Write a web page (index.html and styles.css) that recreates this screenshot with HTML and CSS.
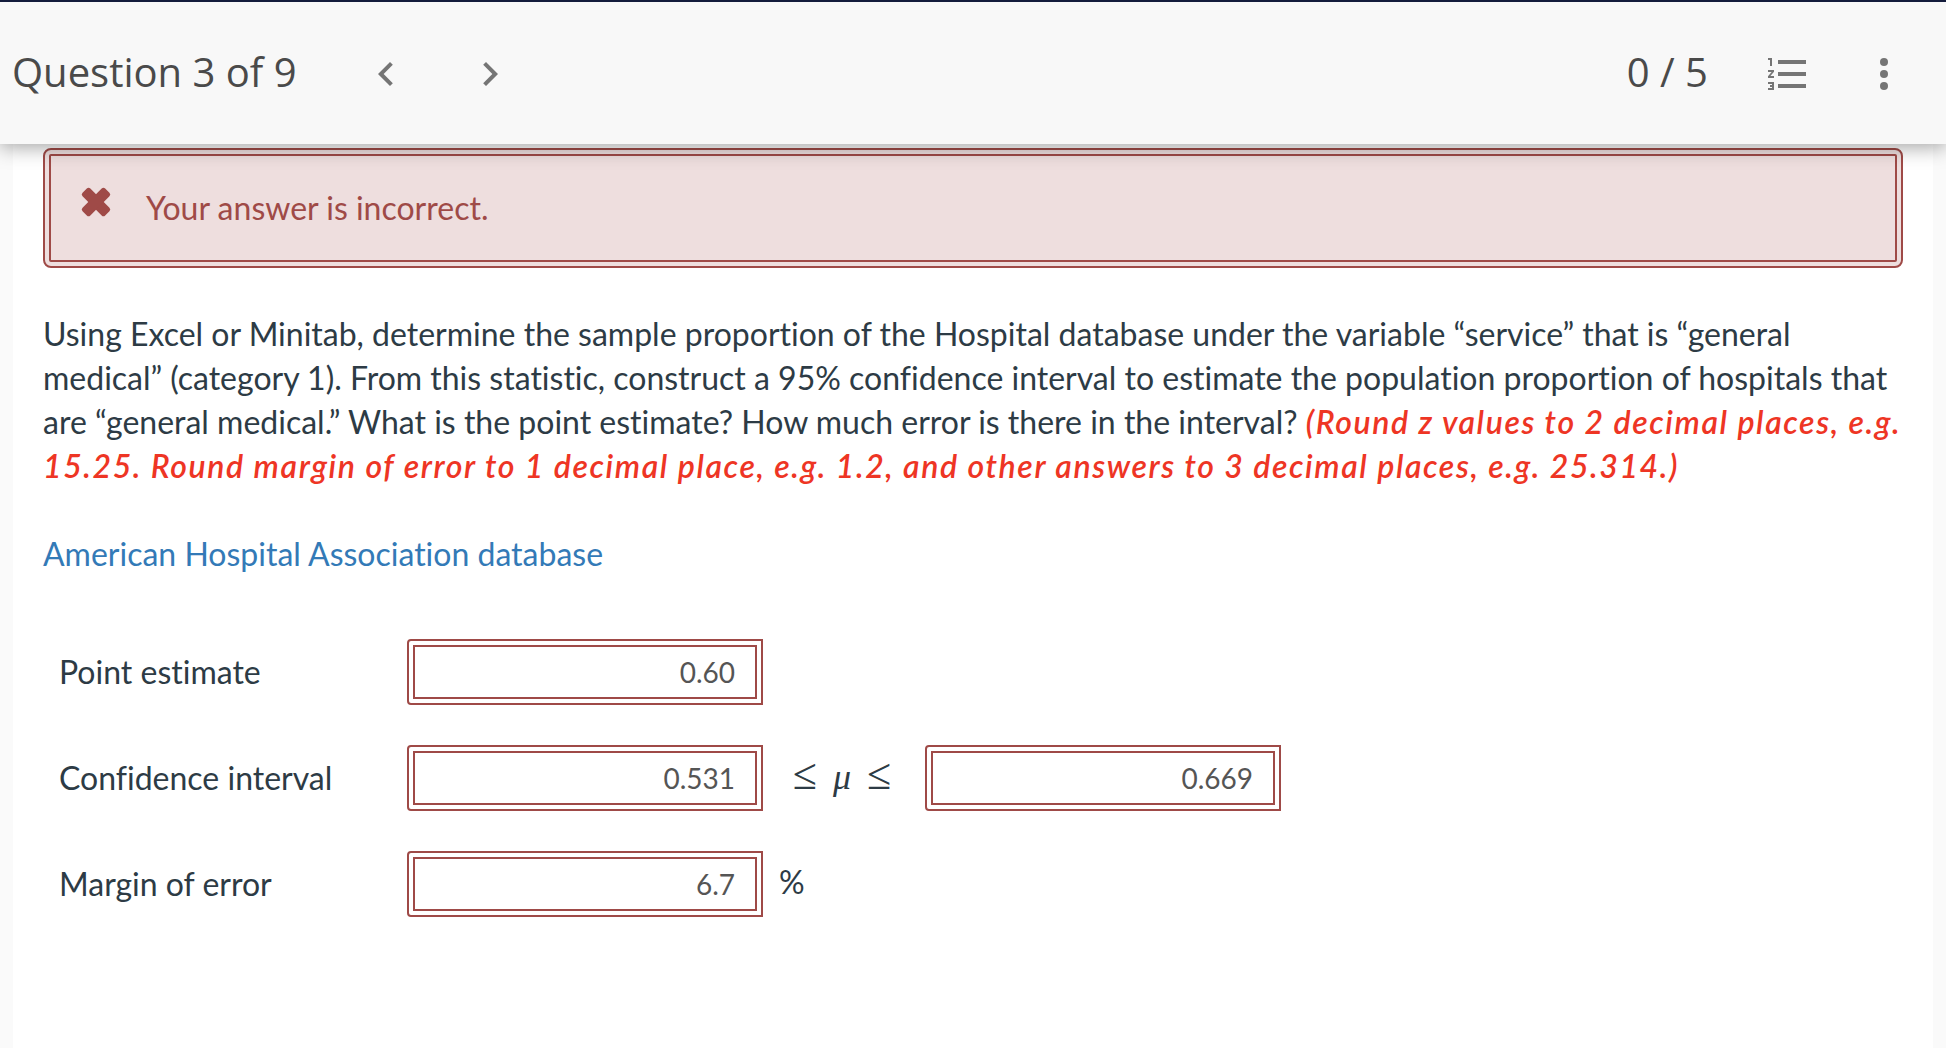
FILE: index.html
```html
<!DOCTYPE html>
<html lang="en">
<head>
<meta charset="utf-8">
<title>Question 3 of 9</title>
<link rel="stylesheet" href="styles.css">
</head>
<body>
<header class="toolbar">
  <h1 class="toolbar-title">Question 3 of 9</h1>
  <nav class="pager" aria-label="Questions">
    <button class="icon-button" type="button" aria-label="Previous question">
      <svg viewBox="0 0 24 24"><path d="M15.41 7.41 14 6l-6 6 6 6 1.41-1.41L10.83 12z"/></svg>
    </button>
    <button class="icon-button" type="button" aria-label="Next question">
      <svg viewBox="0 0 24 24"><path d="M10 6 8.59 7.41 13.17 12l-4.58 4.59L10 18l6-6z"/></svg>
    </button>
  </nav>
  <div class="score">0 / 5</div>
  <div class="tools">
    <button class="icon-button" type="button" aria-label="Question list">
      <svg viewBox="0 0 24 24"><path d="M2 17h2v.5H3v1h1v.5H2v1h3v-4H2v1zm1-9h1V4H2v1h1v3zm-1 3h1.800L2 13.100v.9h3v-1H3.200L5 10.900V10H2v1zm5-6v2h14V5H7zm0 14h14v-2H7v2zm0-6h14v-2H7v2z"/></svg>
    </button>
    <button class="icon-button" type="button" aria-label="More options">
      <svg viewBox="0 0 24 24"><circle cx="12" cy="6" r="2"/><circle cx="12" cy="12" r="2"/><circle cx="12" cy="18" r="2"/></svg>
    </button>
  </div>
</header>
<main class="page">
  <div class="alert" role="alert">
    <svg class="alert-icon" viewBox="0 0 32 32" aria-hidden="true">
      <g transform="rotate(45 16 16)"><rect x="0" y="10.500" width="32" height="11" rx="2.500"/><rect x="10.500" y="0" width="11" height="32" rx="2.500"/></g>
    </svg>
    <span>Your answer is incorrect.</span>
  </div>
  <p class="question">Using Excel or Minitab, determine the sample proportion of the Hospital database under the variable “service” that is “general medical” (category 1). From this statistic, construct a 95% confidence interval to estimate the population proportion of hospitals that are “general medical.” What is the point estimate? How much error is there in the interval? <strong class="rounding">(Round z values to 2 decimal places, e.g. 15.25. Round margin of error to 1 decimal place, e.g. 1.2, and other answers to 3 decimal places, e.g. 25.314.)</strong></p>
  <p class="source"><a href="#">American Hospital Association database</a></p>
  <form class="answers">
    <div class="row">
      <label class="label" for="point">Point estimate</label>
      <input class="answer" id="point" type="text" value="0.60">
    </div>
    <div class="row">
      <label class="label" for="low">Confidence interval</label>
      <input class="answer" id="low" type="text" value="0.531">
      <span class="math"><span>≤</span><i class="symbol">μ</i><span>≤</span></span>
      <input class="answer" type="text" value="0.669" aria-label="Upper limit">
    </div>
    <div class="row">
      <label class="label" for="margin">Margin of error</label>
      <input class="answer" id="margin" type="text" value="6.7">
      <span class="unit">%</span>
    </div>
  </form>
</main>
</body>
</html>
```
FILE: styles.css
```css
* {
  box-sizing: border-box;
}

body {
  margin: 0;
  min-height: 100vh;
  display: flex;
  flex-direction: column;
  background: #fafafa;
  color: #2d3b45;
  font: 32px/44px Lato, "Liberation Sans", sans-serif;
  font-variant-ligatures: no-common-ligatures;
  text-rendering: optimizeLegibility;
}

.toolbar {
  position: relative;
  display: flex;
  align-items: center;
  height: 144px;
  padding: 2px 38px 0 12px;
  border-top: 2px solid #141c3c;
  background: #f8f8f8;
  box-shadow: 0 2px 20px rgba(0, 0, 0, 0.4);
  color: #4a4a4a;
  font-family: "Open Sans", "Noto Sans", sans-serif;
}

.toolbar-title,
.score {
  margin: 0;
  padding-bottom: 4px;
  font-size: 40px;
  font-weight: 400;
}

.pager {
  display: flex;
  gap: 56px;
  margin-left: 65px;
}

.score {
  margin-left: auto;
}

.tools {
  display: flex;
  gap: 48px;
  margin-left: 56px;
}

.icon-button {
  width: 48px;
  height: 48px;
  padding: 0;
  border: 0;
  background: none;
  cursor: pointer;
}

.icon-button svg {
  display: block;
  fill: #757575;
}

.page {
  flex: 1;
  margin: 0 13px;
  padding: 4px 30px 64px;
  background: #fff;
}

.alert {
  display: flex;
  gap: 34px;
  padding: 36px 35px;
  border: 2px solid #9f4a47;
  border-radius: 8px;
  outline: 2px solid #9f4a47;
  outline-offset: -8px;
  background: #eedede;
  color: #9f4a47;
}

.alert-icon {
  width: 32px;
  height: 32px;
  fill: currentColor;
}

.question {
  margin: 44px 0;
}

.rounding {
  color: #ee3524;
  font-style: italic;
  font-weight: 600;
  letter-spacing: 0.05em;
}

.source {
  margin: 0 0 63px;
}

.source a {
  color: #337ab7;
  text-decoration: none;
}

.answers {
  display: flex;
  flex-direction: column;
  gap: 40px;
}

.row {
  display: flex;
  align-items: center;
  padding-left: 16px;
}

.label {
  width: 348px;
}

.answer {
  width: 356px;
  height: 66px;
  padding: 0 26px;
  border: 2px solid #9f4a47;
  border-radius: 4px 0 0 4px;
  outline: 2px solid #9f4a47;
  outline-offset: -8px;
  background: #fff;
  color: #555;
  font: 28px/36px Lato, "Liberation Sans", sans-serif;
  text-align: right;
}

.math {
  display: flex;
  align-items: baseline;
  justify-content: center;
  gap: 16px;
  width: 162px;
  padding: 0 4px 4px 0;
  font-family: "Liberation Serif", serif;
  font-size: 44px;
}

.symbol {
  font-size: 36px;
}

.unit {
  padding: 0 0 4px 16px;
}
```
